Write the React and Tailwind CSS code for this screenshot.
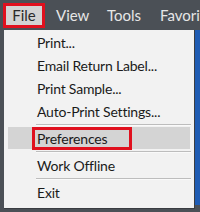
import React from "react";

const font = { fontFamily: 'Lato, "Noto Sans", sans-serif' };

const Sep = () => (
  <div className="ml-[32px] mr-[3px] my-[1px] h-[2px] border-t border-[#bdbdbd] bg-[#fafafa]" />
);

const Item = ({ label }) => (
  <div className="h-[23px] flex items-center pl-[33px] text-[14px] tracking-[-0.2px] text-[#1a1a1a]">{label}</div>
);

export default function App() {
  return (
    <div
      className="w-[200px] h-[212px] bg-[#4b5056] flex flex-col overflow-hidden"
      style={font}
    >
      {/* menu bar */}
      <div className="h-[30px] flex items-center shrink-0 text-[15px] text-[#e6e6e6] whitespace-nowrap">
        <div className="ml-[3px] w-[42px] h-[25px] border-[3px] border-[#e0101e] bg-[#d3d3d3] text-[#2a2a2a] flex items-center justify-center pt-[1px] shrink-0">
          File
        </div>
        <span className="ml-[11px] w-[31px] pt-[1px] shrink-0">View</span>
        <span className="ml-[20px] w-[33px] pt-[1px] shrink-0">Tools</span>
        <span className="ml-[20px] pt-[1px]">Favorites</span>
      </div>

      <div className="flex flex-1">
        <div className="w-[4px] shrink-0" />
        {/* dropdown */}
        <div className="w-[191px] h-[179px] bg-[#f2f2f2] border-r border-b border-[#3a3d41] pt-[1px] shrink-0">
          <Item label="Print..." />
          <Item label="Email Return Label..." />
          <Item label="Print Sample..." />
          <Item label="Auto-Print Settings..." />
          <Sep />
          <div className="ml-[4px] mr-[4px] h-[22px] mt-[1px] bg-[#d4d4d4] relative">
            <span className="absolute left-[24px] top-0 w-[100px] h-[23px] border-[3px] border-[#e0101e] flex items-center pl-[2px] text-[14px] tracking-[-0.2px] text-[#1a1a1a]">
              Preferences
            </span>
          </div>
          <div className="mt-[2px]" />
          <Sep />
          <Item label="Work Offline" />
          <Sep />
          <Item label="Exit" />
        </div>
        <div className="w-[5px] h-[175px] bg-[#1f5cb3] shrink-0" />
      </div>
    </div>
  );
}
